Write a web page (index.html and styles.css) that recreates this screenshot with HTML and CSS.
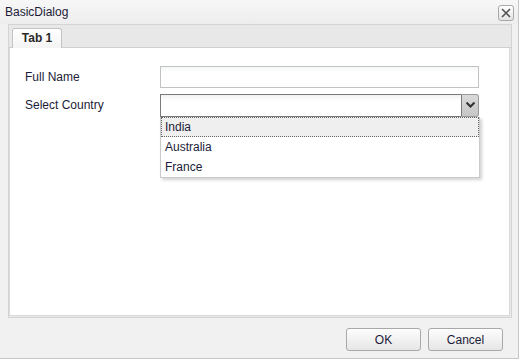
FILE: index.html
```html
<!DOCTYPE html>
<html>
<head>
  <meta charset="utf-8"/>
  <title>BasicDialog</title>
  <link rel="stylesheet" href="styles.css">
</head>
<body>
  <div class="dialog">
    <div class="dialog-header">
      <span class="dialog-title">BasicDialog</span>
      <button type="button" class="close-btn" aria-label="Close">
        <svg width="10" height="10" viewBox="0 0 10 10">
          <path d="M1 1 L9 9 M9 1 L1 9" stroke="#555" stroke-width="1.6" fill="none"/>
        </svg>
      </button>
    </div>

    <div class="tab-panel">
      <div class="tab-strip">
        <div class="tab active">Tab 1</div>
      </div>
      <div class="tab-body">
        <div class="form-row">
          <label class="form-label" for="fullName">Full Name</label>
          <input type="text" class="text-field" id="fullName">
        </div>
        <div class="form-row">
          <label class="form-label">Select Country</label>
          <div class="combo">
            <div class="combo-input"></div>
            <div class="combo-trigger">
              <svg width="9" height="6" viewBox="0 0 9 6">
                <path d="M0.5 0.5 L4.5 4.5 L8.5 0.5" stroke="#333" stroke-width="2" fill="none"/>
              </svg>
            </div>
            <ul class="combo-list">
              <li class="combo-item selected">India</li>
              <li class="combo-item">Australia</li>
              <li class="combo-item">France</li>
            </ul>
          </div>
        </div>
      </div>
    </div>

    <div class="dialog-footer">
      <button type="button" class="btn">OK</button>
      <button type="button" class="btn">Cancel</button>
    </div>
  </div>
</body>
</html>
```

FILE: styles.css
```css
html, body {
  margin: 0;
  padding: 0;
  background: #fff;
}

body {
  font-family: 'Liberation Sans', Arial, sans-serif;
  font-size: 12px;
  color: #1c1c38;
}

.dialog {
  width: 518px;
  height: 358px;
  background: #f1f1f1;
  border-right: 1px solid #c6c6c6;
  border-bottom: 1px solid #c6c6c6;
  display: flex;
  flex-direction: column;
}

.dialog-header {
  height: 24px;
  padding: 0 4px 0 5px;
  display: flex;
  align-items: center;
  justify-content: space-between;
  background: linear-gradient(#f7f7f7, #ededed);
}

.dialog-title {
  font-size: 12px;
  color: #1c1c38;
}

.close-btn {
  width: 16px;
  height: 16px;
  padding: 0;
  margin-top: 1px;
  border: 1px solid #a8a8a8;
  border-radius: 3px;
  background: linear-gradient(#ffffff, #e4e4e4);
  display: flex;
  align-items: center;
  justify-content: center;
}

.tab-panel {
  margin: 0 6px 0 8px;
  height: 292px;
  border: 1px solid #d4d4d4;
  background: #e8e8e8;
  display: flex;
  flex-direction: column;
}

.tab-strip {
  height: 23px;
  padding: 3px 0 0 3px;
  box-sizing: border-box;
  display: flex;
  align-items: flex-end;
  border-bottom: 1px solid #cfcfcf;
}

.tab {
  width: 48px;
  height: 19px;
  line-height: 19px;
  text-align: center;
  font-weight: bold;
  color: #2a2a2a;
  border: 1px solid #c4c4c4;
  border-bottom: none;
  border-radius: 3px 3px 0 0;
  background: linear-gradient(#ffffff, #f4f4f4);
  margin-bottom: -1px;
}

.tab-body {
  flex: 1;
  background: #fff;
  margin: 0 1px 1px 0;
  border: 1px solid #dadada;
  border-top: none;
  padding: 18px 0 0 15px;
}

.form-row {
  display: flex;
  align-items: center;
  height: 22px;
  margin-bottom: 6px;
}

.form-label {
  width: 135px;
  color: #1c1c38;
}

.text-field {
  width: 319px;
  height: 22px;
  box-sizing: border-box;
  margin: 0;
  border: 1px solid #c2c2c2;
  background: linear-gradient(#f5f7f6, #ffffff 6px);
  font: inherit;
}

.combo {
  position: relative;
  width: 319px;
  height: 23px;
  display: flex;
}

.combo-input {
  flex: 1;
  border: 1px solid #7a7a7a;
  border-right: none;
  background: linear-gradient(#f2f2f2, #ffffff 6px);
}

.combo-trigger {
  width: 16px;
  border: 1px solid #999;
  border-left: 1px solid #7a7a7a;
  border-radius: 0 3px 3px 0;
  background: linear-gradient(#dadada, #c6c6c6);
  display: flex;
  align-items: center;
  justify-content: center;
}

.combo-list {
  position: absolute;
  top: 23px;
  left: 0;
  width: 318px;
  margin: 0;
  padding: 0;
  list-style: none;
  background: #fff;
  border: 1px solid #cacaca;
  border-top: none;
  box-shadow: 2px 2px 3px rgba(0, 0, 0, 0.18);
}

.combo-item {
  height: 20px;
  line-height: 19px;
  padding: 0 3px;
  border: 1px solid transparent;
  box-sizing: border-box;
  color: #1c1c38;
}

.combo-item.selected {
  background: #efefef;
  border: 1px dotted #666;
}

.dialog-footer {
  flex: 1;
  display: flex;
  justify-content: flex-end;
  align-items: flex-start;
  gap: 7px;
  padding: 10px 15px 0 0;
}

.btn {
  width: 75px;
  height: 23px;
  border: 1px solid #a9a9a9;
  border-radius: 3px;
  background: linear-gradient(#fdfdfd, #e6e6e6);
  font-family: inherit;
  font-size: 12px;
  color: #1c1c38;
  padding: 0;
}
```
